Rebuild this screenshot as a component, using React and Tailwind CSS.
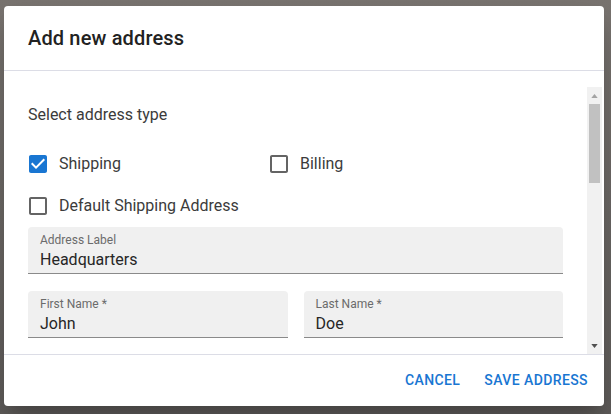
import { useState } from 'react';

function CheckBox({ checked, label, onChange, className = '' }) {
  return (
    <label className={`flex h-[42px] cursor-pointer items-center ${className}`}>
      <span className="flex h-[42px] w-[42px] items-center justify-center -ml-[11px]">
        {checked ? (
          <svg viewBox="0 0 24 24" className="h-6 w-6 fill-[#1976d2]">
            <path d="M19 3H5c-1.11 0-2 .9-2 2v14c0 1.1.89 2 2 2h14c1.11 0 2-.9 2-2V5c0-1.1-.89-2-2-2zm-9 14l-5-5 1.41-1.41L10 14.17l7.59-7.59L19 8l-9 9z" />
          </svg>
        ) : (
          <svg viewBox="0 0 24 24" className="h-6 w-6 fill-[#646464]">
            <path d="M19 5v14H5V5h14m0-2H5c-1.1 0-2 .9-2 2v14c0 1.1.9 2 2 2h14c1.1 0 2-.9 2-2V5c0-1.1-.9-2-2-2z" />
          </svg>
        )}
      </span>
      <input type="checkbox" className="hidden" checked={checked} onChange={onChange} />
      <span className="text-[16px] leading-6 text-[#3b3b3b]">{label}</span>
    </label>
  );
}

function Campo({ label, value, required, className = '' }) {
  return (
    <div className={`h-[47px] rounded-t border-b border-[#8a8a8a] bg-[#f0f0f0] px-3 pt-[5px] ${className}`}>
      <div className="text-[12px] leading-[17px] text-[#6b6b6b]">
        {label}
        {required ? ' *' : ''}
      </div>
      <div className="text-[16px] leading-[22px] text-[#262626]">{value}</div>
    </div>
  );
}

// barra de desplazamiento dibujada (el navegador sin cabeza no la muestra)
function BarraScroll() {
  return (
    <div className="relative mr-[2px] w-[15px] shrink-0 bg-[#f1f1f1]">
      <svg viewBox="0 0 8 5" className="absolute left-[4px] top-[7px] h-[4px] w-[7px] fill-[#a3a3a3]">
        <path d="M4 0L8 5H0z" />
      </svg>
      <div className="absolute left-[2px] right-[2px] top-[17px] h-[79px] bg-[#c1c1c1]" />
      <svg viewBox="0 0 8 5" className="absolute bottom-[6px] left-[4px] h-[4px] w-[7px] fill-[#505050]">
        <path d="M0 0H8L4 5z" />
      </svg>
    </div>
  );
}

export default function App() {
  const [envio, setEnvio] = useState(true);
  const [factura, setFactura] = useState(false);
  const [porDefecto, setPorDefecto] = useState(false);

  return (
    <div
      className="flex h-[414px] w-[611px] items-start bg-gradient-to-b from-[#78736f] to-[#5f5c5a] pl-[4px] pt-[6px]"
      style={{ fontFamily: 'Roboto, "Liberation Sans", sans-serif' }}
    >
      <div className="flex h-[400px] w-[600px] flex-col overflow-hidden rounded bg-white shadow-[0_11px_15px_-7px_rgba(0,0,0,0.2),0_24px_38px_3px_rgba(0,0,0,0.14)]">
        <div className="flex h-[65px] shrink-0 items-center border-b border-[#dcdde6] px-6 pb-[1px]">
          <h2 className="text-[20px] font-medium leading-8 tracking-[0.15px] text-[#222]">Add new address</h2>
        </div>

        <div className="mt-4 flex min-h-0 flex-1">
          <div className="flex-1 overflow-hidden px-6 pt-4">
            <p className="text-[16px] leading-6 text-[#3b3b3b]">Select address type</p>
            <div className="mt-4 flex">
              <CheckBox className="w-[241px]" checked={envio} label="Shipping" onChange={() => setEnvio(!envio)} />
              <CheckBox checked={factura} label="Billing" onChange={() => setFactura(!factura)} />
            </div>
            <CheckBox checked={porDefecto} label="Default Shipping Address" onChange={() => setPorDefecto(!porDefecto)} />

            <Campo label="Address Label" value="Headquarters" />
            <div className="mt-[17px] grid grid-cols-2 gap-4">
              <Campo label="First Name" value="John" required />
              <Campo label="Last Name" value="Doe" required />
            </div>
          </div>
          <BarraScroll />
        </div>

        <div className="flex h-[52px] shrink-0 items-center justify-end gap-2 border-t border-[#dcdde6] p-2">
          <button className="h-9 rounded px-2 text-[14px] font-medium uppercase tracking-[0.4px] text-[#1976d2]">Cancel</button>
          <button className="h-9 rounded px-2 text-[14px] font-medium uppercase tracking-[0.4px] text-[#1976d2]">Save Address</button>
        </div>
      </div>
    </div>
  );
}
